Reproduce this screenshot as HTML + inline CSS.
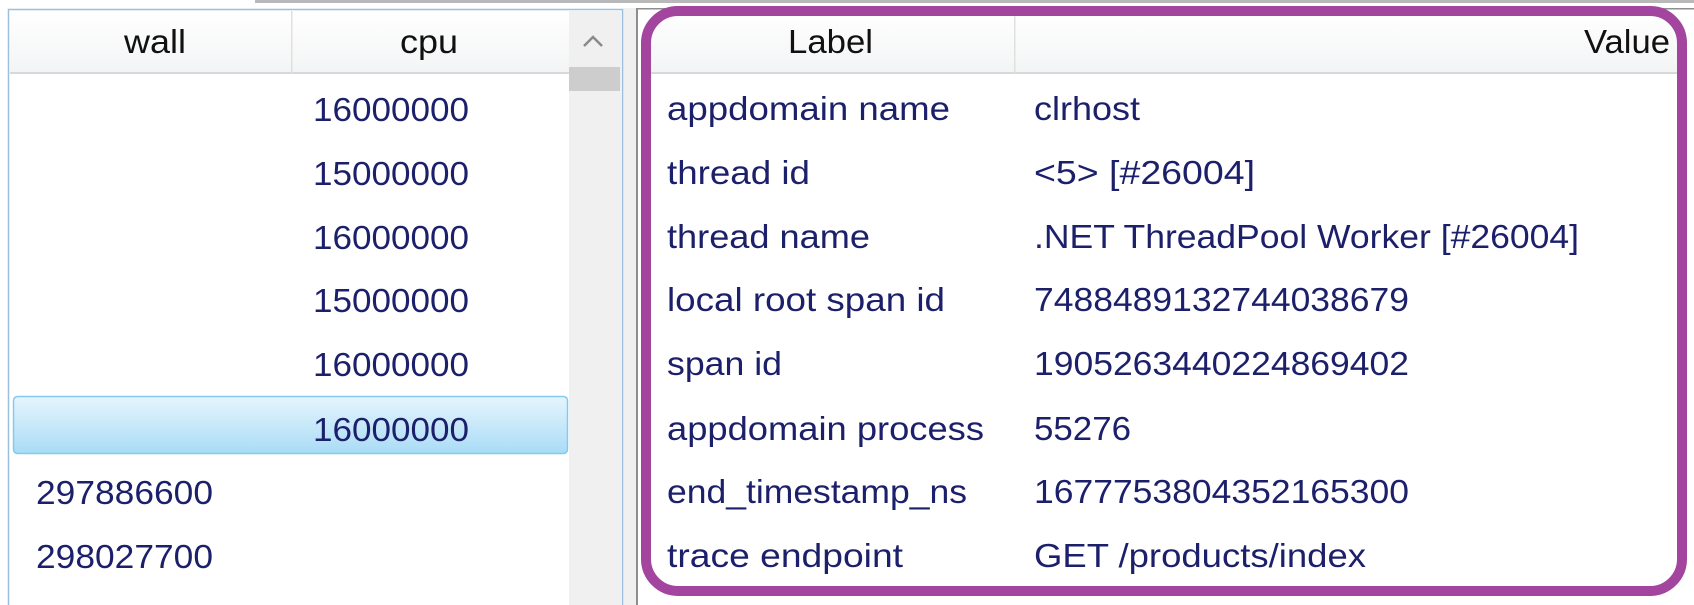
<!DOCTYPE html>
<html><head><meta charset="utf-8"><style>
html,body{margin:0;padding:0;background:#fff;}
svg{display:block;}
text{font-family:"Liberation Sans",sans-serif;font-size:33px;}
.h{fill:#111;}
.d{fill:#1c1f6a;}
</style></head><body>
<svg width="1694" height="605" viewBox="0 0 1694 605" xmlns="http://www.w3.org/2000/svg">
<defs>
<linearGradient id="hg" x1="0" y1="0" x2="0" y2="1"><stop offset="0" stop-color="#ffffff"/><stop offset="1" stop-color="#f3f4f5"/></linearGradient>
<linearGradient id="sg" x1="0" y1="0" x2="0" y2="1"><stop offset="0" stop-color="#e6f5fd"/><stop offset="1" stop-color="#a9dcf6"/></linearGradient>
</defs>
<rect x="0" y="0" width="1694" height="605" fill="#fff"/>
<rect x="255" y="0" width="1439" height="3" fill="#b8b8b8"/>
<rect x="623" y="8" width="16" height="597" fill="#f0f0f0"/>
<rect x="8.5" y="9.5" width="614" height="600" fill="#fff" stroke="#9bbfdc" stroke-width="1.5"/>
<rect x="10" y="11" width="559" height="62" fill="url(#hg)"/>
<rect x="10" y="72" width="559" height="2" fill="#d8d8d8"/>
<rect x="291" y="11" width="1.5" height="62" fill="#e0e0e0"/>
<rect x="569" y="11" width="53" height="594" fill="#f0f0f0"/>
<rect x="569" y="67" width="51" height="24" fill="#cdcdcd"/>
<path d="M584 46 L593 37 L602 46" fill="none" stroke="#8a8a8a" stroke-width="2.5"/>
<text class="h" x="124" y="53" textLength="62" lengthAdjust="spacingAndGlyphs">wall</text>
<text class="h" x="400" y="53" textLength="58" lengthAdjust="spacingAndGlyphs">cpu</text>
<rect x="13.5" y="396.5" width="554" height="57" rx="4" fill="url(#sg)" stroke="#86c9ef" stroke-width="1.5"/>
<text class="d" x="313" y="121" textLength="156" lengthAdjust="spacingAndGlyphs">16000000</text>
<text class="d" x="313" y="185" textLength="156" lengthAdjust="spacingAndGlyphs">15000000</text>
<text class="d" x="313" y="249" textLength="156" lengthAdjust="spacingAndGlyphs">16000000</text>
<text class="d" x="313" y="312" textLength="156" lengthAdjust="spacingAndGlyphs">15000000</text>
<text class="d" x="313" y="376" textLength="156" lengthAdjust="spacingAndGlyphs">16000000</text>
<text class="d" x="313" y="441" textLength="156" lengthAdjust="spacingAndGlyphs">16000000</text>
<text class="d" x="36" y="504" textLength="177" lengthAdjust="spacingAndGlyphs">297886600</text>
<text class="d" x="36" y="568" textLength="177" lengthAdjust="spacingAndGlyphs">298027700</text>
<rect x="636" y="8" width="1058" height="597" fill="#fff"/>
<rect x="636" y="8" width="2" height="597" fill="#8e8e8e"/>
<rect x="638" y="8" width="1056" height="1.5" fill="#8e8e8e"/>
<rect x="646" y="11" width="1037" height="62" fill="url(#hg)"/>
<rect x="646" y="72" width="1037" height="2" fill="#d8d8d8"/>
<rect x="1014" y="11" width="1.5" height="62" fill="#e0e0e0"/>
<text class="h" x="788" y="53" textLength="85" lengthAdjust="spacingAndGlyphs">Label</text>
<text class="h" x="1584" y="53" textLength="86" lengthAdjust="spacingAndGlyphs">Value</text>
<text class="d" x="667" y="120" textLength="283" lengthAdjust="spacingAndGlyphs">appdomain name</text>
<text class="d" x="667" y="184" textLength="143" lengthAdjust="spacingAndGlyphs">thread id</text>
<text class="d" x="667" y="248" textLength="203" lengthAdjust="spacingAndGlyphs">thread name</text>
<text class="d" x="667" y="311" textLength="278" lengthAdjust="spacingAndGlyphs">local root span id</text>
<text class="d" x="667" y="375" textLength="115" lengthAdjust="spacingAndGlyphs">span id</text>
<text class="d" x="667" y="440" textLength="317" lengthAdjust="spacingAndGlyphs">appdomain process</text>
<text class="d" x="667" y="503" textLength="300" lengthAdjust="spacingAndGlyphs">end_timestamp_ns</text>
<text class="d" x="667" y="567" textLength="236" lengthAdjust="spacingAndGlyphs">trace endpoint</text>
<text class="d" x="1034" y="120" textLength="106" lengthAdjust="spacingAndGlyphs">clrhost</text>
<text class="d" x="1034" y="184" textLength="221" lengthAdjust="spacingAndGlyphs">&lt;5&gt; [#26004]</text>
<text class="d" x="1034" y="248" textLength="545" lengthAdjust="spacingAndGlyphs">.NET ThreadPool Worker [#26004]</text>
<text class="d" x="1034" y="311" textLength="375" lengthAdjust="spacingAndGlyphs">7488489132744038679</text>
<text class="d" x="1034" y="375" textLength="375" lengthAdjust="spacingAndGlyphs">1905263440224869402</text>
<text class="d" x="1034" y="440" textLength="97" lengthAdjust="spacingAndGlyphs">55276</text>
<text class="d" x="1034" y="503" textLength="375" lengthAdjust="spacingAndGlyphs">1677753804352165300</text>
<text class="d" x="1034" y="567" textLength="332" lengthAdjust="spacingAndGlyphs">GET /products/index</text>
<rect x="646" y="11" width="1036" height="580" rx="32" fill="none" stroke="#a3449f" stroke-width="10"/>
</svg>
</body></html>
